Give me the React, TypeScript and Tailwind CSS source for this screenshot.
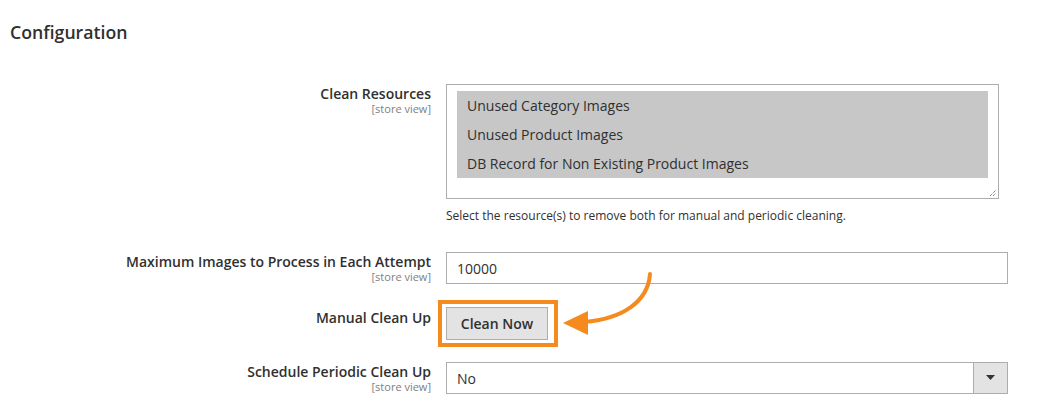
import React from "react";

function Label({ title, scope }: { title: string; scope?: boolean }) {
  return (
    <div className="flex flex-col items-end text-right">
      <div className="text-[14px] leading-[20px] font-semibold text-[#303030]">{title}</div>
      {scope && <div className="text-[11px] leading-[10px] text-[#808080]">[store view]</div>}
    </div>
  );
}

export default function App() {
  return (
    <div className="relative w-[1045px] h-[412px] bg-white overflow-hidden font-['Open_Sans',sans-serif] text-[#303030]">
      <div className="pt-[20px] pl-[10px] text-[17.7px] leading-[24px] font-semibold text-[#303030]">Configuration</div>

      <div className="mt-[40px] grid grid-cols-[431px_1fr] gap-x-[15px]">
        {/* Row 1 */}
        <Label title="Clean Resources" scope />
        <div>
          <div className="relative w-[553px] h-[115px] border border-[#adadad] bg-white pt-[6px] px-[10px]">
            <div className="bg-[#c7c7c7] text-[14px] leading-[29px]">
              <div className="px-[10px]">Unused Category Images</div>
              <div className="px-[10px]">Unused Product Images</div>
              <div className="px-[10px]">DB Record for Non Existing Product Images</div>
            </div>
            <svg className="absolute right-[1px] bottom-[1px]" width="9" height="9" viewBox="0 0 9 9">
              <line x1="2" y1="8" x2="8" y2="2" stroke="#555" strokeWidth="1" strokeDasharray="1 1" />
              <line x1="5" y1="8" x2="8" y2="5" stroke="#555" strokeWidth="1" strokeDasharray="1 1" />
            </svg>
          </div>
          <div className="mt-[9px] text-[12px] leading-[16px] text-[#303030]">
            Select the resource(s) to remove both for manual and periodic cleaning.
          </div>
        </div>

        {/* Row 2 */}
        <div className="mt-[28px]">
          <Label title="Maximum Images to Process in Each Attempt" scope />
        </div>
        <div className="mt-[28px]">
          <div className="w-[562px] h-[32px] border border-[#adadad] bg-white pl-[10px] flex items-center text-[14px]">
            10000
          </div>
        </div>

        {/* Row 3 */}
        <div className="mt-[23px] pt-[1px]">
          <Label title="Manual Clean Up" />
        </div>
        <div className="mt-[23px]">
          <div className="relative w-[102px]">
            <div className="absolute -left-[8px] -top-[7px] -right-[10px] -bottom-[7px] border-[4px] border-[#f58b1f]" />
            <button className="relative w-[102px] h-[33px] bg-[#e3e3e3] border border-[#adadad] text-[14px] font-semibold text-[#303030] flex items-center justify-center">
              Clean Now
            </button>
          </div>
        </div>

        {/* Row 4 */}
        <div className="mt-[22px]">
          <Label title="Schedule Periodic Clean Up" scope />
        </div>
        <div className="mt-[22px]">
          <div className="w-[562px] h-[32px] border border-[#adadad] bg-white flex text-[14px]">
            <div className="flex-1 pl-[10px] flex items-center">No</div>
            <div className="w-[34px] bg-[#e3e3e3] border-l border-[#adadad] flex items-center justify-center">
              <svg width="9" height="6" viewBox="0 0 9 6">
                <polygon points="0,0 9,0 4.5,5" fill="#333" />
              </svg>
            </div>
          </div>
        </div>
      </div>

      <svg className="absolute left-0 top-0 pointer-events-none" width="1045" height="412" viewBox="0 0 1045 412">
        <path d="M650,274 C648,302 622,319 584,322" fill="none" stroke="#f58b1f" strokeWidth="4" strokeLinecap="round" />
        <polygon points="563,323 588,311 588,335" fill="#f58b1f" />
      </svg>
    </div>
  );
}
